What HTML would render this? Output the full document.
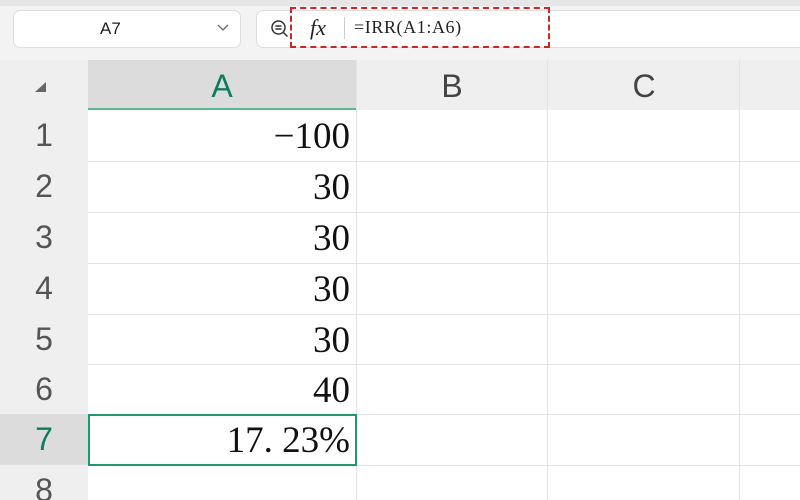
<!DOCTYPE html>
<html><head><style>
html,body{margin:0;width:800px;height:500px;overflow:hidden}
body{background:#f3f3f3;font-family:"Liberation Sans",sans-serif;position:relative}
.a{position:absolute;box-sizing:border-box}
.rh{position:absolute;left:0;width:88px;height:51px;line-height:51px;text-align:center;font-size:32px;color:#555;background:#efefef}
.cell{position:absolute;left:88px;width:268px;height:51px;line-height:54px;text-align:right;padding-right:6px;box-sizing:border-box;font-family:"Liberation Serif",serif;font-size:37px;color:#111}
.hl{position:absolute;left:88px;right:0;height:1px;background:#e4e4e4}
</style></head><body>
<div class="a" style="left:0;top:0;width:800px;height:6px;background:#e6e6e6"></div>
<div class="a" style="left:13px;top:10px;width:228px;height:38px;background:#fff;border:1px solid #ddd;border-radius:7px"></div>
<div class="a" style="left:100px;top:19px;font-size:17px;color:#222">A7</div>
<svg class="a" style="left:216px;top:23px" width="14" height="10"><path d="M2 2 L7 7 L12 2" fill="none" stroke="#666" stroke-width="1.3"/></svg>
<div class="a" style="left:256px;top:10px;width:544px;height:38px;background:#fff;border:1px solid #ddd;border-right:none;border-radius:7px 0 0 7px"></div>
<svg class="a" style="left:270px;top:19px" width="20" height="20"><circle cx="8.5" cy="8.5" r="6.5" fill="none" stroke="#333" stroke-width="1.5"/><path d="M5.5 7h6M5.5 10h6M13.5 13.5l4 4" stroke="#333" stroke-width="1.5"/></svg>
<div class="a" style="left:290px;top:7px;width:260px;height:41px;border:2px dashed #c82828"></div>
<div class="a" style="left:310px;top:15px;font-family:'Liberation Serif',serif;font-style:italic;font-size:22px;color:#222">fx</div>
<div class="a" style="left:344px;top:17px;width:1px;height:22px;background:#ccc"></div>
<div class="a" style="left:354px;top:17px;font-family:'Liberation Serif',serif;font-size:18px;letter-spacing:0.6px;color:#222">=IRR(A1:A6)</div>
<div class="a" style="left:0;top:60px;width:800px;height:440px;background:#fff"></div>
<div class="a" style="left:0;top:60px;width:800px;height:50px;background:#efefef"></div>
<div class="a" style="left:88px;top:60px;width:268px;height:50px;background:#dcdcdc;border-bottom:2px solid #5cb890"></div>
<svg class="a" style="left:32px;top:78px" width="18" height="18"><path d="M3 14 L14 4 L14 14 Z" fill="#666"/></svg>
<div class="a" style="left:88px;top:60px;width:268px;line-height:52px;text-align:center;font-size:32px;color:#127b5f">A</div>
<div class="a" style="left:356px;top:60px;width:192px;line-height:52px;text-align:center;font-size:32px;color:#444">B</div>
<div class="a" style="left:548px;top:60px;width:192px;line-height:52px;text-align:center;font-size:32px;color:#444">C</div>
<div class="a" style="left:356px;top:60px;width:1px;height:440px;background:#e4e4e4"></div>
<div class="a" style="left:547px;top:60px;width:1px;height:440px;background:#e4e4e4"></div>
<div class="a" style="left:739px;top:60px;width:1px;height:440px;background:#e4e4e4"></div>
<div class="hl" style="top:161px"></div><div class="hl" style="top:212px"></div><div class="hl" style="top:263px"></div><div class="hl" style="top:314px"></div><div class="hl" style="top:364px"></div><div class="hl" style="top:414px"></div><div class="hl" style="top:465px"></div>
<div class="rh" style="top:110px">1</div><div class="rh" style="top:161px">2</div><div class="rh" style="top:212px">3</div><div class="rh" style="top:263px">4</div><div class="rh" style="top:314px">5</div><div class="rh" style="top:364px">6</div>
<div class="rh" style="top:414px;background:#dcdcdc;color:#127b5f">7</div><div class="rh" style="top:465px;height:35px">8</div>
<div class="cell" style="top:110px">−100</div><div class="cell" style="top:161px">30</div><div class="cell" style="top:212px">30</div><div class="cell" style="top:263px">30</div><div class="cell" style="top:314px">30</div><div class="cell" style="top:364px">40</div>
<div class="cell" style="top:414px">17.&nbsp;23%</div>
<div class="a" style="left:88px;top:414px;width:269px;height:52px;border:2px solid #1f9a6a"></div>
</body></html>
